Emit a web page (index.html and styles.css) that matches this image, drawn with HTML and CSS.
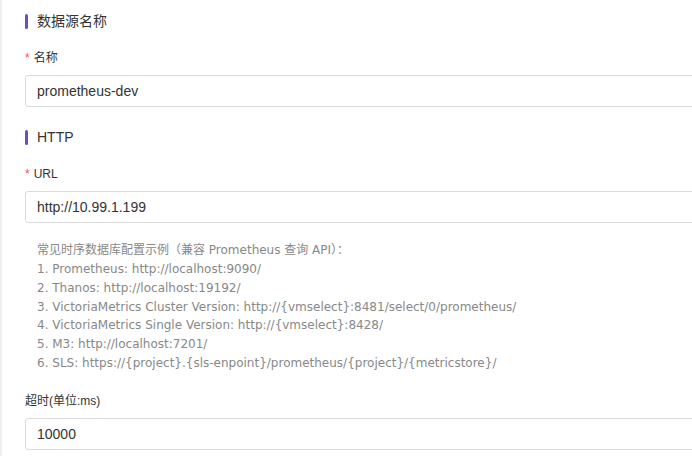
FILE: index.html
```html
<!DOCTYPE html>
<html lang="zh-CN">
<head>
<meta charset="utf-8">
<link rel="stylesheet" href="styles.css">
</head>
<body>
<div class="page">
  <div class="form">
    <div class="section-title">数据源名称</div>
    <div class="field">
      <label class="label required">名称</label>
      <div class="input">prometheus-dev</div>
    </div>
    <div class="section-title">HTTP</div>
    <div class="field field-help">
      <label class="label required">URL</label>
      <div class="input">http://10.99.1.199</div>
      <div class="help">
        <div>常见时序数据库配置示例（兼容 Prometheus 查询 API）：</div>
        <div>1. Prometheus: http://localhost:9090/</div>
        <div>2. Thanos: http://localhost:19192/</div>
        <div>3. VictoriaMetrics Cluster Version: http://{vmselect}:8481/select/0/prometheus/</div>
        <div>4. VictoriaMetrics Single Version: http://{vmselect}:8428/</div>
        <div>5. M3: http://localhost:7201/</div>
        <div>6. SLS: https://{project}.{sls-enpoint}/prometheus/{project}/{metricstore}/</div>
      </div>
    </div>
    <div class="field">
      <label class="label">超时(单位:ms)</label>
      <div class="input">10000</div>
    </div>
  </div>
</div>
</body>
</html>
```

FILE: styles.css
```css
html, body {
  margin: 0;
  padding: 0;
  background: #fff;
}
body {
  font-family: "Liberation Sans", "Noto Sans CJK SC", sans-serif;
  color: #333;
  width: 692px;
  height: 456px;
  overflow: hidden;
}
.page {
  border-left: 2px solid #f0f0f0;
  height: 456px;
  box-sizing: border-box;
  padding: 11px 0 0 23px;
}
.form {
  display: flex;
  flex-direction: column;
  width: 700px;
}
.section-title {
  font-size: 14px;
  line-height: 20px;
  color: #333;
  display: flex;
  align-items: center;
  gap: 9px;
  margin-bottom: 17px;
}
.section-title::before {
  content: "";
  width: 3px;
  height: 15px;
  border-radius: 2px;
  background: #6a4dbf;
}
.field {
  display: flex;
  flex-direction: column;
  margin-bottom: 20px;
}
.field-help {
  margin-bottom: 18px;
}
.label {
  font-size: 12px;
  line-height: 20px;
  color: #333;
  margin-bottom: 7px;
}
.label.required::before {
  content: "*";
  color: #ff4d4f;
  margin-right: 4px;
  font-family: "Liberation Sans", sans-serif;
}
.input {
  height: 32px;
  box-sizing: border-box;
  border: 1px solid #dcdcdc;
  border-radius: 3px;
  padding: 0 11px;
  font-size: 14px;
  line-height: 30px;
  color: #333;
}
.help {
  margin-top: 18px;
  padding-left: 12px;
  font-family: "DejaVu Sans", "Noto Sans CJK SC", sans-serif;
  font-size: 12px;
  line-height: 18.86px;
  color: #888;
}
```
